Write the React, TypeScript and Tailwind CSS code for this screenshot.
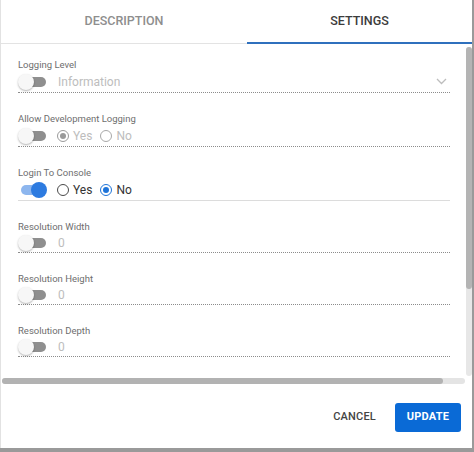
import React from 'react';

const Toggle: React.FC<{ on?: boolean }> = ({ on }) => (
    <div className="relative w-[29px] h-[16px] shrink-0">
        <div className={`absolute left-[3px] top-[3px] w-[25px] h-[10px] rounded-full ${on ? 'bg-[#8db6ee]' : 'bg-[#8f8f8f]'}`} />
        <div
            className={`absolute top-0 w-[16px] h-[16px] rounded-full ${on ? 'right-0 bg-[#2d7be0]' : 'left-0 bg-[#f7f7f7] shadow-[0_1px_2px_rgba(0,0,0,0.3)]'}`}
        />
    </div>
);

const Radio: React.FC<{ label: string; checked?: boolean; disabled?: boolean }> = ({ label, checked, disabled }) => {
    const ring = disabled ? (checked ? 'border-[#9a9a9a]' : 'border-[#a8a8a8]') : checked ? 'border-[#1e74d9]' : 'border-[#4a4a4a]';
    const dot = disabled ? 'bg-[#9a9a9a]' : 'bg-[#1e74d9]';
    return (
        <div className="flex items-center gap-[4px]">
            <span className={`w-[12px] h-[12px] rounded-full border-[1.5px] flex items-center justify-center ${ring}`}>
                {checked && <span className={`w-[6px] h-[6px] rounded-full ${dot}`} />}
            </span>
            <span className={`text-[12px] ${disabled ? 'text-[#bdbdbd]' : 'text-[#333]'}`}>{label}</span>
        </div>
    );
};

const Field: React.FC<{ label: string; solid?: boolean; h?: string; children: React.ReactNode }> = ({ label, solid, h = 'h-[21px]', children }) => (
    <div className={`mb-[20px] border-b ${solid ? 'border-solid border-[#dcdcdc]' : 'border-dotted border-[#8c8c8c]'}`}>
        <div className="h-[12px] leading-[12px] text-[9.5px] text-[#6e6e6e]">{label}</div>
        <div className={`${h} flex items-center`}>{children}</div>
    </div>
);

export default function App() {
    return (
        <div className="w-[474px] h-[452px] bg-[#9a9a9a] font-['Roboto','Liberation_Sans',sans-serif]">
            <div className="w-[472px] h-[448px] bg-white flex flex-col border-l border-[#e2e2e2]">
                {/* Tabs */}
                <div className="h-[44px] flex border-b border-[#e3e3e3] shrink-0">
                    <div className="w-[246px] flex items-center justify-center text-[12.5px] font-medium text-[#8e8e8e]">DESCRIPTION</div>
                    <div className="relative flex-1 flex items-center justify-center text-[12.5px] font-medium text-[#3c3c3c]">
                        SETTINGS
                        <span className="absolute left-0 right-0 bottom-[-1px] h-[2px] bg-[#2f70bd]" />
                    </div>
                </div>

                {/* Body */}
                <div className="h-[332px] flex shrink-0">
                    <div className="flex-1 pl-[17px] pr-[16px] pt-[15px] overflow-hidden">
                        <Field label="Logging Level">
                            <Toggle />
                            <span className="ml-[11px] flex-1 text-[12px] text-[#bdbdbd]">Information</span>
                            <svg width="11" height="7" viewBox="0 0 11 7" className="mr-[3px]" fill="none" stroke="#bdbdbd" strokeWidth="1.3">
                                <path d="M1 1l4.5 4.5L10 1" />
                            </svg>
                        </Field>
                        <Field label="Allow Development Logging">
                            <Toggle />
                            <div className="ml-[10px] flex items-center gap-[8px]">
                                <Radio label="Yes" checked disabled />
                                <Radio label="No" disabled />
                            </div>
                        </Field>
                        <Field label="Login To Console" solid>
                            <Toggle on />
                            <div className="ml-[10px] flex items-center gap-[8px]">
                                <Radio label="Yes" />
                                <Radio label="No" checked />
                            </div>
                        </Field>
                        <Field label="Resolution Width" h="h-[19px]">
                            <Toggle />
                            <span className="ml-[11px] text-[12px] text-[#bdbdbd]">0</span>
                        </Field>
                        <Field label="Resolution Height" h="h-[19px]">
                            <Toggle />
                            <span className="ml-[11px] text-[12px] text-[#bdbdbd]">0</span>
                        </Field>
                        <Field label="Resolution Depth" h="h-[19px]">
                            <Toggle />
                            <span className="ml-[11px] text-[12px] text-[#bdbdbd]">0</span>
                        </Field>
                    </div>
                    {/* vertical scrollbar */}
                    <div className="w-[6px] pt-[3px] shrink-0">
                        <div className="h-full rounded-full bg-[#e7e7e7]">
                            <div className="h-[242px] rounded-full bg-[#b4b4b4]" />
                        </div>
                    </div>
                </div>

                {/* horizontal scrollbar */}
                <div className="h-[10px] pt-[2px] pl-[1px] pr-[7px] shrink-0">
                    <div className="h-[6px] rounded-full bg-[#e4e4e4]">
                        <div className="w-[441px] h-[6px] rounded-full bg-[#b2b2b2]" />
                    </div>
                </div>

                {/* Footer */}
                <div className="flex-1 flex items-center justify-end pr-[11px]">
                    <button className="mr-[19px] text-[11px] font-medium text-[#444] tracking-[0.2px]">CANCEL</button>
                    <button className="w-[66px] h-[29px] rounded-[3px] bg-[#0a6ad6] text-white text-[11px] font-bold tracking-[0.2px]">UPDATE</button>
                </div>
            </div>
        </div>
    );
}
